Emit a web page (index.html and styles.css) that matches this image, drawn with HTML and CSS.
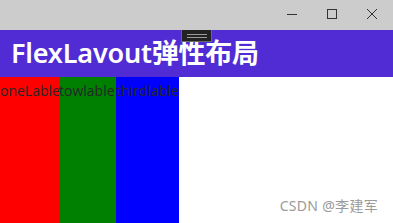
FILE: index.html
```html
<!DOCTYPE html>
<html>
<head>
<meta charset="utf-8">
<link rel="stylesheet" href="styles.css">
</head>
<body>
<div class="window">
  <div class="titlebar">
    <div class="ctrl">
      <svg width="10" height="10" viewBox="0 0 10 10"><path d="M0 5.5H10" stroke="#333" stroke-width="1"/></svg>
    </div>
    <div class="ctrl">
      <svg width="10" height="10" viewBox="0 0 10 10"><rect x="0.5" y="0.5" width="9" height="9" fill="none" stroke="#333" stroke-width="1"/></svg>
    </div>
    <div class="ctrl">
      <svg width="10" height="10" viewBox="0 0 10 10"><path d="M0 0L10 10M10 0L0 10" stroke="#333" stroke-width="1"/></svg>
    </div>
  </div>
  <div class="header">
    <div class="title">FlexLavout弹性布局</div>
  </div>
  <div class="row">
    <div class="col red">oneLable</div>
    <div class="col green">towlable</div>
    <div class="col blue">thirdlable</div>
  </div>
  <div class="handle"><span></span><span></span></div>
  <div class="watermark">CSDN @李建军</div>
</div>
</body>
</html>
```
FILE: styles.css
```css
html, body {
  margin: 0;
  padding: 0;
  background: #ffffff;
}
.window {
  position: relative;
  width: 393px;
  height: 223px;
  overflow: hidden;
  font-family: "Open Sans", "Noto Sans CJK SC", sans-serif;
}
.titlebar {
  height: 30px;
  background: #cccccc;
  display: flex;
  justify-content: flex-end;
}
.ctrl {
  width: 40px;
  height: 28px;
  display: flex;
  align-items: center;
  justify-content: center;
}
.ctrl:last-child {
  margin-right: 1px;
}
.header {
  height: 47px;
  background: #512bd4;
  display: flex;
  align-items: center;
  padding-left: 11px;
}
.title {
  color: #ffffff;
  font-family: "Noto Sans", "Noto Sans CJK SC", sans-serif;
  font-weight: 600;
  font-size: 27px;
  line-height: 32px;
  margin-top: -1px;
  letter-spacing: -0.2px;
}
.row {
  display: flex;
  height: 146px;
}
.col {
  font-family: "Open Sans", sans-serif;
  font-size: 14px;
  color: #262626;
  line-height: 20px;
  padding-top: 4px;
  white-space: nowrap;
}
.red { background: #ff0000; width: 59px; }
.green { background: #008000; width: 57px; }
.blue { background: #0000ff; width: 63px; }
.handle {
  position: absolute;
  left: 181px;
  top: 30px;
  width: 29px;
  height: 11px;
  background: #222222;
  border: 1px solid #6a6a6a;
  border-top: none;
  display: flex;
  flex-direction: column;
  justify-content: center;
  align-items: center;
  gap: 2px;
}
.handle span {
  display: block;
  width: 20px;
  height: 1px;
  background: #9a9a9a;
}
.watermark {
  position: absolute;
  right: 15px;
  bottom: 9px;
  font-family: "Noto Sans", "Noto Sans CJK SC", sans-serif;
  font-size: 14px;
  color: #9a9a9a;
  line-height: 17px;
  letter-spacing: 0.3px;
}
```
